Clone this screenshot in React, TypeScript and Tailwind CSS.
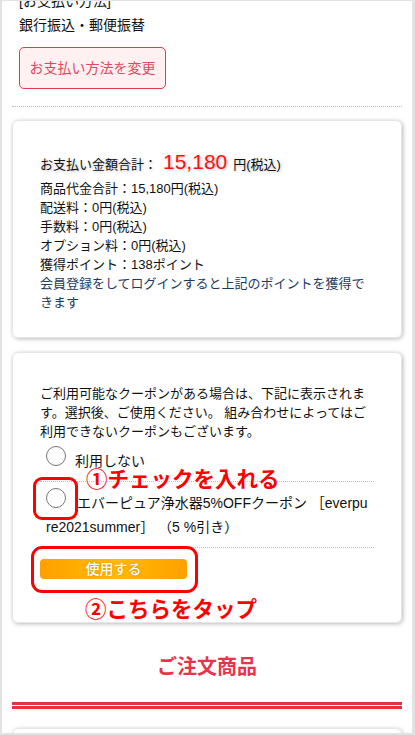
import React from "react";

const font = { fontFamily: '"Liberation Sans", "Noto Sans CJK JP", sans-serif' };

function Radio() {
  return (
    <span className="inline-block w-[20px] h-[20px] rounded-full border border-[#777] bg-white align-baseline" />
  );
}

export default function App() {
  return (
    <div
      className="relative w-[415px] h-[735px] overflow-hidden bg-white border-t border-b-2 border-l-2 border-r-[3px] border-[#e2e2e2] text-[#111]"
      style={font}
    >
      {/* payment method */}
      <div className="px-[17px] -mt-[11px]">
        <div className="text-[14px] leading-[22px]">[お支払い方法]</div>
        <div className="text-[14px] leading-[22px] mt-[2px]">銀行振込・郵便振替</div>
        <div className="mt-[11px] w-[147px] h-[42px] flex items-center justify-center rounded-[5px] border border-[#e8364c] bg-[#fff0f2] text-[#e8465c] text-[14px]">
          お支払い方法を変更
        </div>
      </div>
      <div className="mx-[10px] mt-[17px] border-t border-dotted border-[#bbb]" />

      {/* total card */}
      <div className="mx-[10px] mt-[13px] rounded-[6px] border border-[#e6e6e6] shadow-[1px_1px_4px_rgba(0,0,0,0.28)] px-[27px] pt-[27px] pb-[25px] text-[13px]">
        <div className="leading-[28px] [text-shadow:1px_1px_3px_rgba(0,0,0,0.25)]">
          お支払い金額合計：
          <span className="ml-[6px] text-[21px] text-[#ff1010]">15,180</span>
          <span className="ml-[6px]">円(税込)</span>
        </div>
        <div className="leading-[19px]">
          <div>商品代金合計：15,180円(税込)</div>
          <div>配送料：0円(税込)</div>
          <div>手数料：0円(税込)</div>
          <div>オプション料：0円(税込)</div>
          <div>獲得ポイント：138ポイント</div>
          <div className="text-[#1c3a62]">会員登録をしてログインすると上記のポイントを獲得できます</div>
        </div>
      </div>

      {/* coupon card */}
      <div className="mx-[10px] mt-[14px] rounded-[6px] border border-[#e6e6e6] shadow-[1px_1px_4px_rgba(0,0,0,0.28)] px-[27px] pt-[31px] pb-[43px] text-[13px]">
        <div className="leading-[19px]">
          ご利用可能なクーポンがある場合は、下記に表示されます。選択後、ご使用ください。 組み合わせによってはご利用できないクーポンもございます。
        </div>
        <div className="mt-[5px] pb-[8px] pl-[6px] leading-[24px] text-[14px]">
          <Radio />
          <span className="ml-[9px]">利用しない</span>
        </div>
        <div className="border-t border-dotted border-[#bbb] pt-[6px] pb-[8px] pl-[6px] pr-[6px] leading-[24px] text-[14px] break-all">
          <Radio />
          <span className="ml-[11px]">エバーピュア浄水器5%OFFクーポン ［everpure2021summer］ （5 %引き）</span>
        </div>
        <div className="border-t border-dotted border-[#bbb]" />
        <div className="mt-[11px] w-[147px] h-[20px] rounded-[4px] bg-[linear-gradient(90deg,#ffa000,#ffbb00_50%,#ffa000)] flex items-center justify-center text-white text-[14px] font-medium [text-shadow:0_0_2px_rgba(160,80,0,0.5)]">
          使用する
        </div>
      </div>

      {/* title */}
      <div className="mt-[29px] text-center text-[20px] leading-[30px] font-bold text-[#e8334a]">ご注文商品</div>
      <div className="mx-[10px] mt-[20px] h-[7px] border-t-[3px] border-b-[3px] border-[#ea3040]" />

      <div className="mx-[10px] mt-[19px] h-[40px] rounded-[6px] border border-[#e6e6e6] shadow-[1px_1px_4px_rgba(0,0,0,0.28)]" />

      {/* annotations */}
      <div className="absolute left-[31px] top-[476px] w-[45px] h-[43px] rounded-[9px] border-[3px] border-[#ff0000]" />
      <div className="absolute left-[29px] top-[545px] w-[167px] h-[47px] rounded-[11px] border-[3px] border-[#ff0000]" />
      <div
        className="absolute left-[84px] top-[465px] text-[21.5px] leading-[28px] font-bold text-[#ff0000] whitespace-nowrap"
        style={{ textShadow: "0 0 2px #fff, 0 0 2px #fff, 0 0 3px #fff" }}
      >
        ①チェックを入れる
      </div>
      <div
        className="absolute left-[83px] top-[595px] text-[21.5px] leading-[28px] font-bold text-[#ff0000] whitespace-nowrap"
        style={{ textShadow: "0 0 2px #fff, 0 0 2px #fff, 0 0 3px #fff" }}
      >
        ②こちらをタップ
      </div>
    </div>
  );
}
